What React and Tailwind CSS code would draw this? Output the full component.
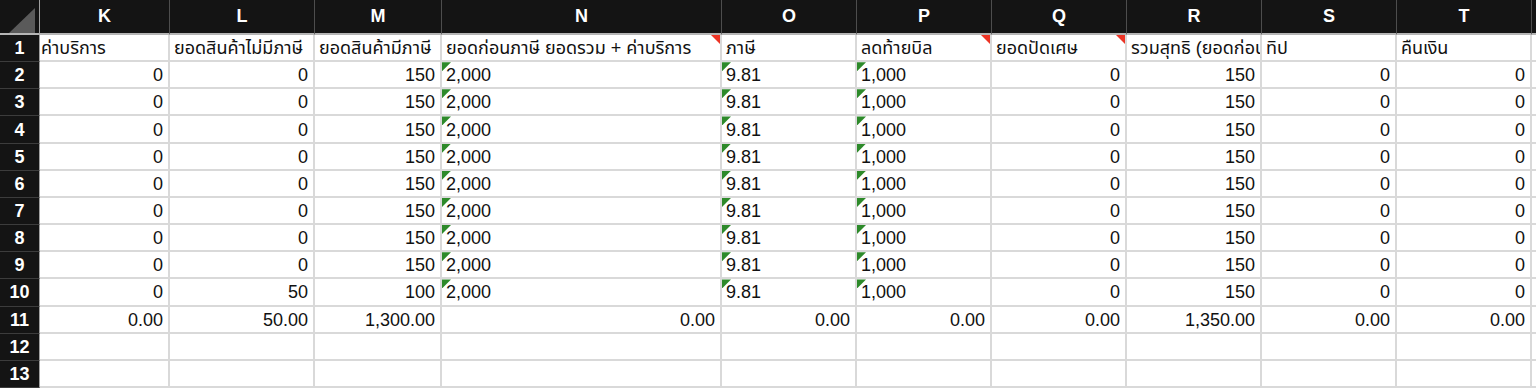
import React from 'react';

const cols = ['K', 'L', 'M', 'N', 'O', 'P', 'Q', 'R', 'S', 'T'];

const headers = [
  'ค่าบริการ',
  'ยอดสินค้าไม่มีภาษี',
  'ยอดสินค้ามีภาษี',
  'ยอดก่อนภาษี ยอดรวม + ค่าบริการ',
  'ภาษี',
  'ลดท้ายบิล',
  'ยอดปัดเศษ',
  'รวมสุทธิ (ยอดก่อนภาษี + ภาษี)',
  'ทิป',
  'คืนเงิน',
];

// columns with a red comment marker in row 1
const commented = { N: true, P: true, Q: true };
// columns holding numbers stored as text (green marker, left aligned)
const textNums = { N: '2,000', O: '9.81', P: '1,000' };

const dataRow = (l, m) => ({ K: '0', L: l, M: m, Q: '0', R: '150', S: '0', T: '0' });

const rows = [
  ...Array.from({ length: 8 }, () => dataRow('0', '150')),
  dataRow('50', '100'),
];

const totals = {
  K: '0.00', L: '50.00', M: '1,300.00', N: '0.00', O: '0.00',
  P: '0.00', Q: '0.00', R: '1,350.00', S: '0.00', T: '0.00',
};

const font = { fontFamily: '"Liberation Sans", Arial, "Noto Sans Thai", "Noto Sans", sans-serif' };

const RowHead = ({ children }) => (
  <div className="bg-[#141414] text-white font-bold text-[18px] flex items-center justify-center pt-px border-r border-r-[#a0a0a0] border-b border-b-[#3c3c3c]">
    {children}
  </div>
);

const Cell = ({ children, align = 'right', className = '' }) => (
  <div
    className={`relative bg-white border-r-2 border-b-2 border-[#d9d9d9] flex items-center pt-[2px] overflow-hidden whitespace-nowrap text-[18px] text-[#111] ${
      align === 'right' ? 'justify-end pr-[5px]' : 'justify-start pl-[4px]'
    } ${className}`}
  >
    {children}
  </div>
);

const GreenMark = () => (
  <span className="absolute left-0 top-0 w-[9px] h-[9px] bg-[#2d8a2a] [clip-path:polygon(0_0,100%_0,0_100%)]" />
);

const RedMark = () => (
  <span className="absolute right-0 top-0 w-[9px] h-[9px] bg-[#ec3324] [clip-path:polygon(0_0,100%_0,100%_100%)]" />
);

export default function App() {
  return (
    <div
      className="w-[1536px] h-[388px] overflow-hidden bg-white grid grid-cols-[40px_130px_145px_127px_280px_repeat(6,135px)_1fr] grid-rows-[35px_repeat(13,27.17px)]"
      style={font}
    >
      {/* corner */}
      <div className="relative bg-[#141414] border-r border-r-[#a0a0a0] border-b-2 border-b-[#b5b5b5]">
        <span className="absolute left-[9px] top-[8px] w-[26px] h-[25px] bg-[#5a5a5a] [clip-path:polygon(100%_0,100%_100%,0_100%)]" />
      </div>
      {cols.map((c) => (
        <div
          key={c}
          className="bg-[#141414] text-white font-bold text-[18px] flex items-center justify-center border-r border-r-[#4d4d4d] border-b-2 border-b-[#b5b5b5]"
        >
          {c}
        </div>
      ))}
      <div className="bg-[#141414] border-b-2 border-b-[#b5b5b5]" />

      {/* row 1: titles */}
      <RowHead>1</RowHead>
      {cols.map((c, i) => (
        <Cell key={c} align="left" className={c === 'K' ? 'pl-px' : ''}>
          {headers[i]}
          {commented[c] && <RedMark />}
        </Cell>
      ))}
      <div className="bg-white border-b-2 border-[#d9d9d9]" />

      {/* rows 2 - 10 */}
      {rows.map((r, ri) => (
        <React.Fragment key={ri}>
          <RowHead>{ri + 2}</RowHead>
          {cols.map((c) =>
            textNums[c] ? (
              <Cell key={c} align="left">
                <GreenMark />
                {textNums[c]}
              </Cell>
            ) : (
              <Cell key={c}>{r[c]}</Cell>
            )
          )}
          <div className="bg-white border-b-2 border-[#d9d9d9]" />
        </React.Fragment>
      ))}

      {/* row 11: totals */}
      <RowHead>11</RowHead>
      {cols.map((c) => (
        <Cell key={c}>{totals[c]}</Cell>
      ))}
      <div className="bg-white border-b-2 border-[#d9d9d9]" />

      {/* empty rows */}
      {[12, 13].map((n) => (
        <React.Fragment key={n}>
          <RowHead>{n}</RowHead>
          {cols.map((c) => (
            <Cell key={c} />
          ))}
          <div className="bg-white border-b-2 border-[#d9d9d9]" />
        </React.Fragment>
      ))}
    </div>
  );
}
